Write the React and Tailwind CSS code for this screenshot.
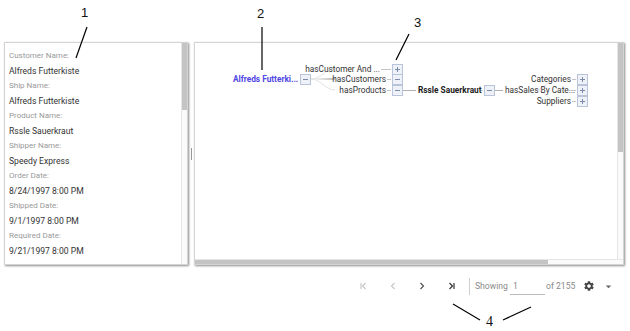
import React from 'react';
import { MdSettings, MdArrowDropDown } from 'react-icons/md';

const fields = [
  ['Customer Name:', 'Alfreds Futterkiste'],
  ['Ship Name:', 'Alfreds Futterkiste'],
  ['Product Name:', 'Rssle Sauerkraut'],
  ['Shipper Name:', 'Speedy Express'],
  ['Order Date:', '8/24/1997 8:00 PM'],
  ['Shipped Date:', '9/1/1997 8:00 PM'],
  ['Required Date:', '9/21/1997 8:00 PM'],
];

// node boxes, coords relative to graph canvas (page x - 195, page y - 43)
const Toggle = ({ x, y, plus }) => (
  <g>
    <rect x={x + 0.5} y={y + 0.5} width="10" height="10" fill="#eef1f8" stroke="#b9c3da" />
    <line x1={x + 3} y1={y + 5.5} x2={x + 8} y2={y + 5.5} stroke="#7d8aa8" />
    {plus && <line x1={x + 5.5} y1={y + 3} x2={x + 5.5} y2={y + 8} stroke="#7d8aa8" />}
  </g>
);

const Label = ({ x, y, right, className, children }) => (
  <div
    className={`absolute leading-[12px] whitespace-nowrap text-[8.3px] ${className || 'text-[#333]'}`}
    style={right ? { right: 422 - x, top: y - 6 } : { left: x, top: y - 6 }}
  >
    {children}
  </div>
);

const Graph = () => (
  <div className="relative flex-1 overflow-hidden">
    <svg className="absolute inset-0" width="422" height="216">
      {/* edges */}
      <path d="M116 36 L140 35 L140 37 Z" fill="#bdbdbd" />
      <path d="M116 36 C126 36 130 26 140 26" stroke="#e2e2e2" fill="none" />
      <path d="M116 36 C126 36 130 47 140 47" stroke="#e2e2e2" fill="none" />
      <line x1="186" y1="26.5" x2="196" y2="26.5" stroke="#c4c4c4" />
      <line x1="192" y1="36.5" x2="196" y2="36.5" stroke="#c4c4c4" />
      <line x1="192" y1="47.5" x2="196" y2="47.5" stroke="#c4c4c4" />
      <line x1="208" y1="47.5" x2="221" y2="47.5" stroke="#b0b0b0" />
      <line x1="285" y1="47.5" x2="288" y2="47.5" stroke="#c4c4c4" />
      <line x1="299" y1="47.5" x2="308" y2="47.5" stroke="#b0b0b0" />
      <path d="M340 47 C350 47 352 36 362 36" stroke="#e2e2e2" fill="none" />
      <path d="M340 47 C350 47 352 58 362 58" stroke="#e2e2e2" fill="none" />
      <line x1="377" y1="36.5" x2="381" y2="36.5" stroke="#c4c4c4" />
      <line x1="374" y1="47.5" x2="381" y2="47.5" stroke="#c4c4c4" />
      <line x1="377" y1="58.5" x2="381" y2="58.5" stroke="#c4c4c4" />
      <Toggle x={105} y={31} />
      <Toggle x={197} y={21} plus />
      <Toggle x={197} y={31} />
      <Toggle x={197} y={42} />
      <Toggle x={289} y={42} />
      <Toggle x={382} y={31} plus />
      <Toggle x={382} y={42} plus />
      <Toggle x={382} y={53} plus />
    </svg>
    <Label x={38} y={36} className="font-bold text-[#5046e4]">Alfreds Futterki...</Label>
    <Label x={185} y={26} right>hasCustomer And ...</Label>
    <Label x={191} y={36} right>hasCustomers</Label>
    <Label x={191} y={47} right>hasProducts</Label>
    <Label x={223} y={47} className="font-bold text-[#222]">Rssle Sauerkraut</Label>
    <Label x={310} y={47}>hasSales By Cate...</Label>
    <Label x={376} y={36} right>Categories</Label>
    <Label x={376} y={58} right>Suppliers</Label>
  </div>
);

const Chevron = ({ dir, bar, color }) => (
  <svg width="12" height="12" viewBox="0 0 12 12" fill="none" stroke={color} strokeWidth="1.2">
    {dir === 'left' ? <path d="M7.5 3 L4.5 6 L7.5 9" /> : <path d="M4.5 3 L7.5 6 L4.5 9" />}
    {bar && (dir === 'left' ? <line x1="3" y1="3" x2="3" y2="9" /> : <line x1="9" y1="3" x2="9" y2="9" />)}
  </svg>
);

export default function App() {
  return (
    <div className="relative w-[630px] h-[331px] bg-white font-['Roboto',sans-serif] overflow-hidden">
      {/* panels */}
      <div className="flex pt-[42px] pl-[4px] h-[265px]">
        <div className="flex w-[184px] h-[223px] border border-[#d4d4d4] shadow-[1px_1px_2px_rgba(0,0,0,0.45)] bg-white">
          <div className="flex-1 pl-[4px] pt-[6px] overflow-hidden">
            {fields.map(([label, value]) => (
              <div key={label} className="flex flex-col">
                <div className="h-[14px] leading-[14px] text-[8px] text-[#9a9a9a]">{label}</div>
                <div className="h-[16px] leading-[16px] text-[8.6px] text-[#333]">{value}</div>
              </div>
            ))}
          </div>
          <div className="w-[6px] border-l border-[#e6e6e6] bg-[#fafafa]">
            <div className="h-[67px] bg-[#c4c4c4]" />
          </div>
        </div>
        <div className="w-[6px] flex items-center justify-center">
          <div className="w-[1px] h-[12px] bg-[#999]" />
        </div>
        <div className="flex flex-col w-[430px] h-[223px] border border-[#d4d4d4] shadow-[1px_1px_2px_rgba(0,0,0,0.45)] bg-white">
          <div className="flex flex-1">
            <Graph />
            <div className="w-[6px] border-l border-[#e6e6e6] bg-[#fafafa]">
              <div className="h-[109px] bg-[#c4c4c4]" />
            </div>
          </div>
          <div className="h-[5px] bg-[#fafafa] border-t border-[#e6e6e6]">
            <div className="w-[353px] h-full bg-[#c4c4c4]" />
          </div>
        </div>
      </div>

      {/* pager toolbar */}
      <div className="flex items-center h-[24px] mt-[9px] pl-[349px] text-[8.6px] text-[#8a8a8a]">
        <div className="w-[29px] flex justify-center"><Chevron dir="left" bar color="#c8c8c8" /></div>
        <div className="w-[29px] flex justify-center"><Chevron dir="left" color="#c8c8c8" /></div>
        <div className="w-[29px] flex justify-center"><Chevron dir="right" color="#555" /></div>
        <div className="w-[29px] flex justify-center"><Chevron dir="right" bar color="#333" /></div>
        <div className="ml-[4px] w-[1px] h-[17px] bg-[#cfcfcf]" />
        <span className="ml-[5px] w-[35px]">Showing</span>
        <div className="w-[35px] h-[18px] border-b border-[#bbb] pl-[3px] leading-[18px]">1</div>
        <span className="ml-[1px] w-[37px]">of 2155</span>
        <MdSettings className="text-[#444]" size={12} />
        <MdArrowDropDown className="ml-[7px] text-[#666]" size={13} />
      </div>

      {/* annotations */}
      <svg className="absolute inset-0 pointer-events-none" width="630" height="331">
        <line x1="87" y1="27" x2="76" y2="58" stroke="#000" strokeWidth="1.2" />
        <line x1="262" y1="27" x2="262" y2="70" stroke="#000" strokeWidth="1.2" />
        <line x1="409" y1="34" x2="396" y2="60" stroke="#000" strokeWidth="1.2" />
        <line x1="453" y1="304" x2="480" y2="320" stroke="#000" strokeWidth="1.2" />
        <line x1="503" y1="320" x2="531" y2="307" stroke="#000" strokeWidth="1.2" />
      </svg>
      <div className="absolute left-[81px] top-[5px] text-[13px] leading-[15px] text-[#111] font-['Liberation_Sans',sans-serif]">1</div>
      <div className="absolute left-[257px] top-[6px] text-[13px] leading-[15px] text-[#111] font-['Liberation_Sans',sans-serif]">2</div>
      <div className="absolute left-[414px] top-[15px] text-[13px] leading-[15px] text-[#111] font-['Liberation_Sans',sans-serif]">3</div>
      <div className="absolute left-[486px] top-[314px] text-[14px] leading-[16px] text-[#111] font-['Liberation_Serif',serif]">4</div>
    </div>
  );
}
